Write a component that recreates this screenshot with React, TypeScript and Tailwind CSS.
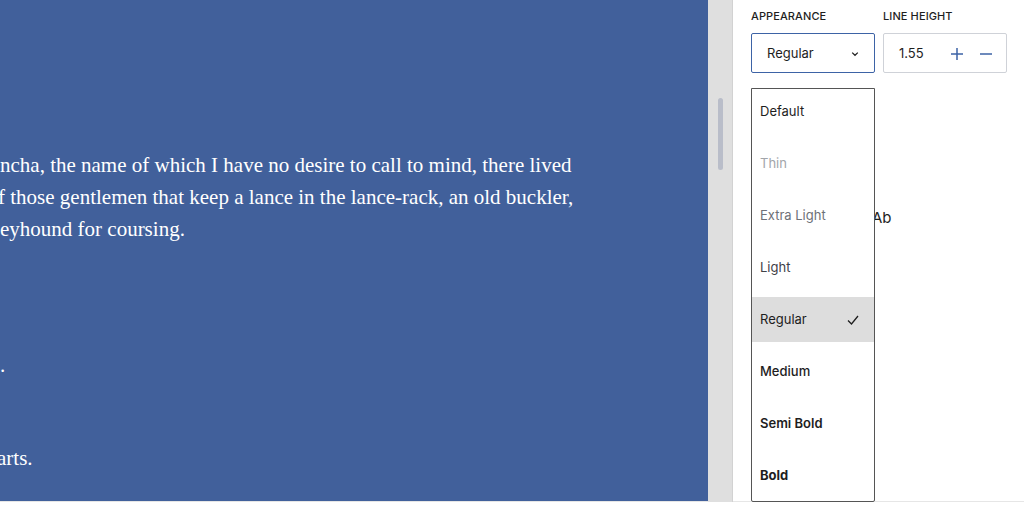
import React from "react";

const items: { label: string; cls: string; selected?: boolean }[] = [
  { label: "Default", cls: "font-normal text-[#1e1e1e]" },
  { label: "Thin", cls: "font-normal text-[#a2a5aa]" },
  { label: "Extra Light", cls: "font-normal text-[#6e7178]" },
  { label: "Light", cls: "font-normal text-[#3f4248]" },
  { label: "Regular", cls: "font-normal text-[#1e1e1e]", selected: true },
  { label: "Medium", cls: "font-medium text-[#1e1e1e]" },
  { label: "Semi Bold", cls: "font-semibold text-[#1e1e1e]" },
  { label: "Bold", cls: "font-bold text-[#1e1e1e]" },
];

export default function App() {
  return (
    <div className="w-[1024px] h-[528px] overflow-hidden bg-white flex flex-col font-['Inter','Liberation_Sans',sans-serif]">
      <div className="flex h-[502px] border-b border-[#e6e6e6]">
        {/* Editor canvas */}
        <div className="w-[708px] h-[501px] bg-[#41609b] overflow-hidden text-white font-['Liberation_Serif',serif] text-[21px] leading-[32px] whitespace-nowrap">
          <div className="pt-[149px]">
            <div>ncha, the name of which I have no desire to call to mind, there lived</div>
            <div className="ml-[-2px]">f those gentlemen that keep a lance in the lance-rack, an old buckler,</div>
            <div>eyhound for coursing.</div>
          </div>
          <div className="mt-[104px]">.</div>
          <div className="mt-[61px] ml-[-3px]">arts.</div>
        </div>

        {/* Scrollbar strip */}
        <div className="w-[25px] h-[502px] bg-[#dfdfdf] border-r border-[#d2d2d2] pt-[98px] pl-[10px]">
          <div className="w-[5px] h-[72px] rounded-full bg-[#b9bdc9]" />
        </div>

        {/* Sidebar */}
        <div className="relative flex-1 h-[502px] pl-[18px]">
          <div className="flex gap-[8px] pt-[8px]">
            <div className="w-[124px]">
              <div className="text-[11px] leading-[16px] font-medium uppercase text-[#1e1e1e] tracking-[0.1px]">Appearance</div>
              <div className="mt-[9px] h-[40px] rounded-[2px] border border-[#3d63a6] flex items-center justify-between pl-[15px] pr-[14px] pt-[2px] text-[13px] text-[#1e1e1e]">
                <span>Regular</span>
                <svg width="10" height="10" viewBox="0 0 10 10" fill="none">
                  <path d="M2.2 3.6 L5 6.3 L7.8 3.6" stroke="#1e1e1e" strokeWidth="1.2" />
                </svg>
              </div>
            </div>
            <div className="w-[124px]">
              <div className="text-[11px] leading-[16px] font-medium uppercase text-[#1e1e1e] tracking-[0.1px]">Line height</div>
              <div className="mt-[9px] h-[40px] rounded-[2px] border border-[#cfd2d8] flex items-center pl-[15px] pt-[2px] text-[13px] text-[#1e1e1e]">
                <span className="w-[44px]">1.55</span>
                <svg width="16" height="16" viewBox="0 0 16 16" fill="none" className="ml-[6px]">
                  <path d="M8 2 V14 M2 8 H14" stroke="#3d63a6" strokeWidth="1.5" />
                </svg>
                <svg width="16" height="16" viewBox="0 0 16 16" fill="none" className="ml-[13px]">
                  <path d="M2 8 H14" stroke="#3d63a6" strokeWidth="1.5" />
                </svg>
              </div>
            </div>
          </div>

          <div className="mt-[135px] ml-[121px] text-[15px] leading-[20px] text-[#1e1e1e]">Ab</div>

          {/* Dropdown menu */}
          <div className="absolute left-[18px] top-[88px] w-[124px] h-[414px] bg-white border border-[#555555] rounded-b-[2px] flex flex-col gap-[7px] text-[13px]">
            {items.map((it) => (
              <div
                key={it.label}
                className={`h-[45px] flex items-center justify-between pl-[8px] pr-[14px] ${it.selected ? "bg-[#dddddd]" : ""} ${it.cls}`}
              >
                <span>{it.label}</span>
                {it.selected && (
                  <svg width="14" height="14" viewBox="0 0 14 14" fill="none">
                    <path d="M2 7.5 L5.5 11 L12 3" stroke="#1e1e1e" strokeWidth="1.3" />
                  </svg>
                )}
              </div>
            ))}
          </div>
        </div>
      </div>
    </div>
  );
}
